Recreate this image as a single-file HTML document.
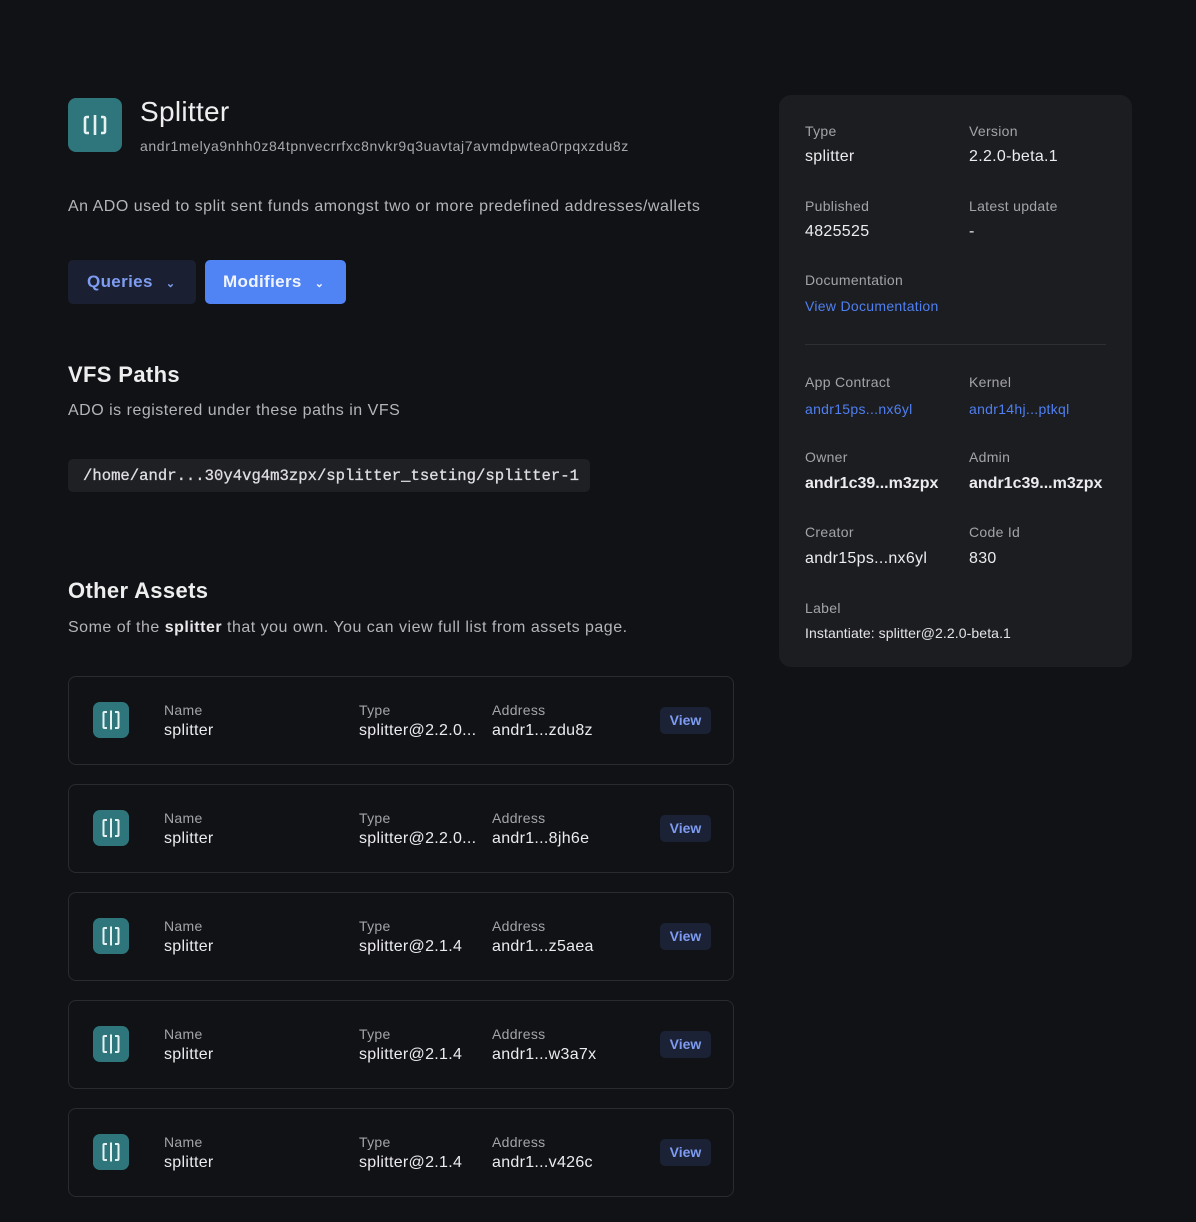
<!DOCTYPE html>
<html><head><meta charset="utf-8"><style>
*{margin:0;padding:0;box-sizing:border-box}
body{width:1196px;height:1222px;background:#111216;font-family:"Liberation Sans",sans-serif;color:#e8e8ea;position:relative;overflow:hidden;letter-spacing:0.35px}
.a{position:absolute;white-space:nowrap}
.lbl{font-size:14px;color:#a3a4a8;letter-spacing:0.3px}
.val{font-size:16px;color:#ececee;letter-spacing:0.3px}
.link{font-size:14px;color:#4f7ff0;letter-spacing:0.3px}
.panel{position:absolute;left:779px;top:95px;width:353px;height:572px;background:#1c1d21;border-radius:12px}
.card{position:absolute;left:68px;width:666px;height:89px;border:1px solid #2a2b30;border-radius:8px;background:#111216}
.ic{position:absolute;left:24px;top:25px;width:36px;height:36px;background:#2e767c;border-radius:7px}
.view{position:absolute;left:591px;top:30px;width:51px;height:27px;background:#1b2236;border-radius:5px;color:#7d9bf0;font-size:14px;font-weight:bold;text-align:center;line-height:27px;letter-spacing:0}
</style></head><body>
<div class="a" style="left:68px;top:98px;width:54px;height:54px;background:#2e767c;border-radius:8px">
<svg width="54" height="54" viewBox="0 0 54 54"><g fill="none" stroke="#e6f2f2" stroke-width="2.6" stroke-linejoin="round"><path d="M21 19h-2.5a1.5 1.5 0 0 0-1.5 1.5v13a1.5 1.5 0 0 0 1.5 1.5H21"/><path d="M27 17v20"/><path d="M33 19h2.5a1.5 1.5 0 0 1 1.5 1.5v13a1.5 1.5 0 0 1-1.5 1.5H33"/></g></svg></div>
<div class="a" style="left:140px;top:96px;font-size:28px;color:#eee;letter-spacing:0.3px">Splitter</div>
<div class="a" style="left:140px;top:138px;font-size:14px;color:#a8a9ad;letter-spacing:0.62px">andr1melya9nhh0z84tpnvecrrfxc8nvkr9q3uavtaj7avmdpwtea0rpqxzdu8z</div>
<div class="a" style="left:68px;top:198px;font-size:16px;color:#b4b5b9;letter-spacing:0.5px">An ADO used to split sent funds amongst two or more predefined addresses/wallets</div>
<div class="a" style="left:68px;top:260px;width:128px;height:44px;background:#1a2031;border-radius:5px;color:#7e9cf2;font-size:17px;font-weight:bold;line-height:44px;padding-left:19px">Queries <span style="font-size:11px;margin-left:8px">&#8964;</span></div>
<div class="a" style="left:205px;top:260px;width:141px;height:44px;background:#5084f5;border-radius:5px;color:#f0f4ff;font-size:17px;font-weight:bold;line-height:44px;padding-left:18px">Modifiers <span style="font-size:11px;margin-left:8px">&#8964;</span></div>
<div class="a" style="left:68px;top:362px;font-size:22px;font-weight:bold;color:#eee">VFS Paths</div>
<div class="a" style="left:68px;top:402px;font-size:16px;color:#b4b5b9;letter-spacing:0.5px">ADO is registered under these paths in VFS</div>
<div class="a" style="left:68px;top:459px;width:522px;height:33px;background:#1f2024;border-radius:5px;font-family:'Liberation Mono',monospace;font-size:15.6px;color:#dedee0;line-height:34px;padding-left:15px;letter-spacing:0;-webkit-text-stroke:0.3px #dedee0">/home/andr...30y4vg4m3zpx/splitter_tseting/splitter-1</div>
<div class="a" style="left:68px;top:578px;font-size:22px;font-weight:bold;color:#eee">Other Assets</div>
<div class="a" style="left:68px;top:619px;font-size:16px;color:#b4b5b9;letter-spacing:0.5px">Some of the <b style="color:#e8e8ea">splitter</b> that you own. You can view full list from assets page.</div>

<div class="card" style="top:676px"><div class="ic"><svg width="36" height="36"><g fill="none" stroke="#e6f2f2" stroke-width="2"><path d="M14 10h-2.5a1 1 0 0 0-1 1v14a1 1 0 0 0 1 1H14"/><path d="M18 8.5v19"/><path d="M22 10h2.5a1 1 0 0 1 1 1v14a1 1 0 0 1-1 1H22"/></g></svg></div>
<div class="a lbl" style="left:95px;top:25px">Name</div><div class="a val" style="left:95px;top:45px">splitter</div>
<div class="a lbl" style="left:290px;top:25px">Type</div><div class="a val" style="left:290px;top:45px">splitter@2.2.0...</div>
<div class="a lbl" style="left:423px;top:25px">Address</div><div class="a val" style="left:423px;top:45px">andr1...zdu8z</div><div class="view">View</div></div>
<div class="card" style="top:784px"><div class="ic"><svg width="36" height="36"><g fill="none" stroke="#e6f2f2" stroke-width="2"><path d="M14 10h-2.5a1 1 0 0 0-1 1v14a1 1 0 0 0 1 1H14"/><path d="M18 8.5v19"/><path d="M22 10h2.5a1 1 0 0 1 1 1v14a1 1 0 0 1-1 1H22"/></g></svg></div>
<div class="a lbl" style="left:95px;top:25px">Name</div><div class="a val" style="left:95px;top:45px">splitter</div>
<div class="a lbl" style="left:290px;top:25px">Type</div><div class="a val" style="left:290px;top:45px">splitter@2.2.0...</div>
<div class="a lbl" style="left:423px;top:25px">Address</div><div class="a val" style="left:423px;top:45px">andr1...8jh6e</div><div class="view">View</div></div>
<div class="card" style="top:892px"><div class="ic"><svg width="36" height="36"><g fill="none" stroke="#e6f2f2" stroke-width="2"><path d="M14 10h-2.5a1 1 0 0 0-1 1v14a1 1 0 0 0 1 1H14"/><path d="M18 8.5v19"/><path d="M22 10h2.5a1 1 0 0 1 1 1v14a1 1 0 0 1-1 1H22"/></g></svg></div>
<div class="a lbl" style="left:95px;top:25px">Name</div><div class="a val" style="left:95px;top:45px">splitter</div>
<div class="a lbl" style="left:290px;top:25px">Type</div><div class="a val" style="left:290px;top:45px">splitter@2.1.4</div>
<div class="a lbl" style="left:423px;top:25px">Address</div><div class="a val" style="left:423px;top:45px">andr1...z5aea</div><div class="view">View</div></div>
<div class="card" style="top:1000px"><div class="ic"><svg width="36" height="36"><g fill="none" stroke="#e6f2f2" stroke-width="2"><path d="M14 10h-2.5a1 1 0 0 0-1 1v14a1 1 0 0 0 1 1H14"/><path d="M18 8.5v19"/><path d="M22 10h2.5a1 1 0 0 1 1 1v14a1 1 0 0 1-1 1H22"/></g></svg></div>
<div class="a lbl" style="left:95px;top:25px">Name</div><div class="a val" style="left:95px;top:45px">splitter</div>
<div class="a lbl" style="left:290px;top:25px">Type</div><div class="a val" style="left:290px;top:45px">splitter@2.1.4</div>
<div class="a lbl" style="left:423px;top:25px">Address</div><div class="a val" style="left:423px;top:45px">andr1...w3a7x</div><div class="view">View</div></div>
<div class="card" style="top:1108px"><div class="ic"><svg width="36" height="36"><g fill="none" stroke="#e6f2f2" stroke-width="2"><path d="M14 10h-2.5a1 1 0 0 0-1 1v14a1 1 0 0 0 1 1H14"/><path d="M18 8.5v19"/><path d="M22 10h2.5a1 1 0 0 1 1 1v14a1 1 0 0 1-1 1H22"/></g></svg></div>
<div class="a lbl" style="left:95px;top:25px">Name</div><div class="a val" style="left:95px;top:45px">splitter</div>
<div class="a lbl" style="left:290px;top:25px">Type</div><div class="a val" style="left:290px;top:45px">splitter@2.1.4</div>
<div class="a lbl" style="left:423px;top:25px">Address</div><div class="a val" style="left:423px;top:45px">andr1...v426c</div><div class="view">View</div></div>

<div class="panel"></div>
<div class="a lbl" style="left:805px;top:123px">Type</div><div class="a val" style="left:805px;top:148px">splitter</div>
<div class="a lbl" style="left:969px;top:123px">Version</div><div class="a val" style="left:969px;top:148px">2.2.0-beta.1</div>
<div class="a lbl" style="left:805px;top:198px">Published</div><div class="a val" style="left:805px;top:223px">4825525</div>
<div class="a lbl" style="left:969px;top:198px">Latest update</div><div class="a val" style="left:969px;top:223px">-</div>
<div class="a lbl" style="left:805px;top:272px">Documentation</div><div class="a link" style="left:805px;top:298px">View Documentation</div>
<div class="a" style="left:805px;top:344px;width:301px;height:1px;background:#2e2f34"></div>
<div class="a lbl" style="left:805px;top:374px">App Contract</div><div class="a link" style="left:805px;top:401px">andr15ps...nx6yl</div>
<div class="a lbl" style="left:969px;top:374px">Kernel</div><div class="a link" style="left:969px;top:401px">andr14hj...ptkql</div>
<div class="a lbl" style="left:805px;top:449px">Owner</div><div class="a val" style="left:805px;top:475px;font-weight:bold;letter-spacing:0">andr1c39...m3zpx</div>
<div class="a lbl" style="left:969px;top:449px">Admin</div><div class="a val" style="left:969px;top:475px;font-weight:bold;letter-spacing:0">andr1c39...m3zpx</div>
<div class="a lbl" style="left:805px;top:524px">Creator</div><div class="a val" style="left:805px;top:550px">andr15ps...nx6yl</div>
<div class="a lbl" style="left:969px;top:524px">Code Id</div><div class="a val" style="left:969px;top:550px">830</div>
<div class="a lbl" style="left:805px;top:600px">Label</div><div class="a" style="left:805px;top:625px;font-size:14px;color:#e4e4e6;letter-spacing:0.1px">Instantiate: splitter@2.2.0-beta.1</div>
</body></html>
